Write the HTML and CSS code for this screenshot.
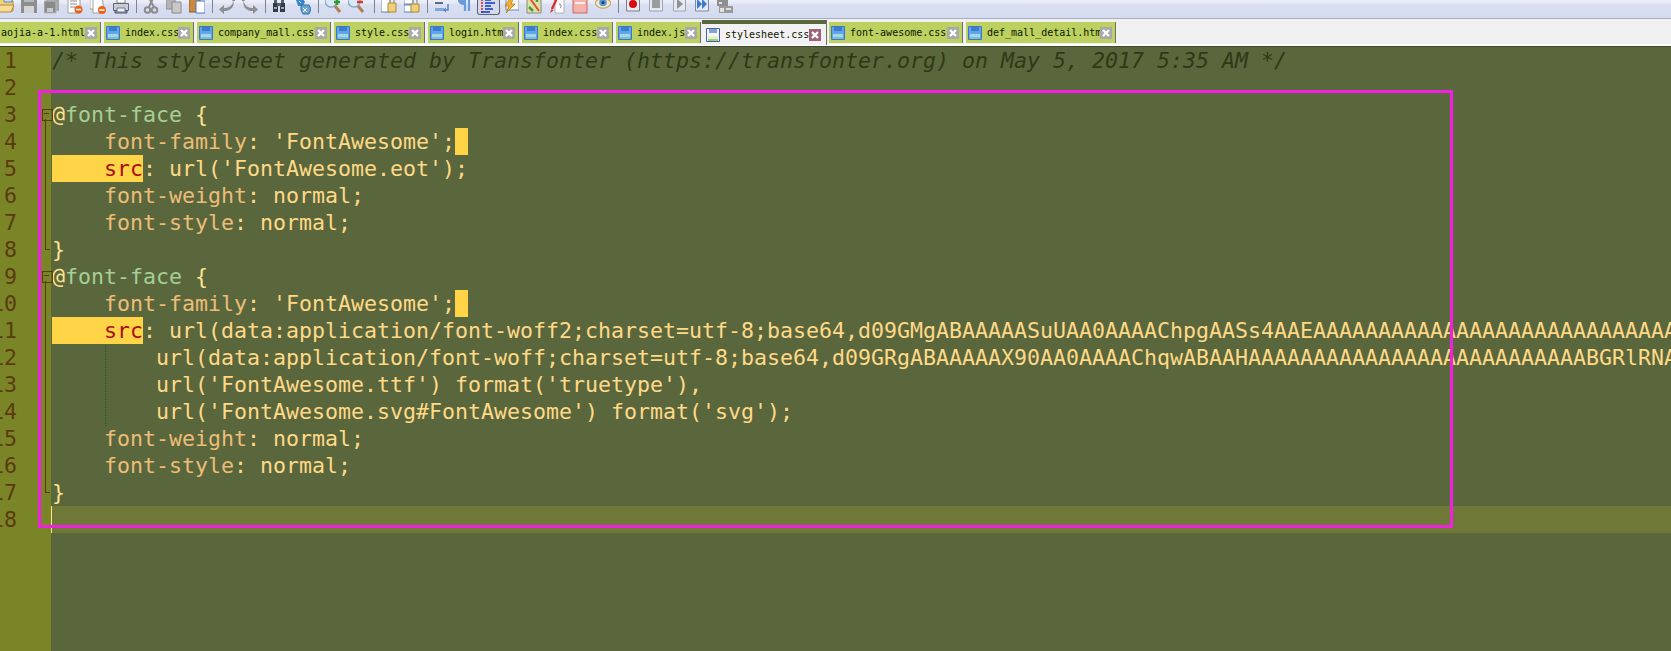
FILE: index.html
```html
<!DOCTYPE html>
<html lang="en">
<head>
<meta charset="utf-8">
<title>stylesheet.css</title>
<link rel="stylesheet" href="styles.css">
</head>
<body>
<svg class="defs" width="0" height="0" aria-hidden="true">
  <defs>
    <symbol id="i-open" viewBox="0 0 16 18"><path d="M-3 -3h12l2 4h4v10H-3z" fill="#f2cf7a" stroke="#b88a2c"/><path d="M-3 11l3-6h16l-3 7H-3z" fill="#f6dc98" stroke="#b88a2c"/><path d="M6 -4h8v6H6z" fill="#cfe0f5" stroke="#5b86c4"/></symbol>
    <symbol id="i-save" viewBox="0 0 16 18"><path d="M0 -4h16v17H0z" fill="#8e8e8e"/><path d="M3 6h10v7H3z" fill="#d4d4d4"/><path d="M3 -3h10v5H3z" fill="#b8b8b8"/></symbol>
    <symbol id="i-saveall" viewBox="0 0 16 18"><path d="M2 -2h13v13H2z" fill="#a4a4a4"/><path d="M0 1h12v12H0z" fill="#8a8a8a" stroke="#bbb"/><path d="M3 8h6v4H3z" fill="#c8c8c8"/></symbol>
    <symbol id="i-close" viewBox="0 0 16 18"><path d="M1 -4h10l2 2v15H1z" fill="#fff" stroke="#a0a0a0"/><path d="M3 1h7M3 4h7M3 7h5" stroke="#8a8a8a"/><circle cx="11.500" cy="9.500" r="4" fill="#e8641c"/><path d="M9 9.500h5" stroke="#fff" stroke-width="1.500"/></symbol>
    <symbol id="i-closeall" viewBox="0 0 16 18"><path d="M0 -4h8l2 2v11H0z" fill="#fff" stroke="#a0a0a0"/><path d="M3 -1h8l2 2v12H3z" fill="#fff" stroke="#a0a0a0"/><circle cx="12" cy="10" r="4" fill="#e8641c"/><path d="M9.500 10h5" stroke="#fff" stroke-width="1.500"/></symbol>
    <symbol id="i-print" viewBox="0 0 16 18"><path d="M4 -4h8v7H4z" fill="#fff" stroke="#888"/><path d="M.5 3.500h15v7H.5z" fill="#c6ccd8" stroke="#667"/><path d="M2 10.500h12v2.500H2z" fill="#8d94a6" stroke="#556"/><path d="M4 8h8v4H4z" fill="#eef" stroke="#778"/></symbol>
    <symbol id="i-cut" viewBox="0 0 16 18"><path d="M11 -4L6 7M5 -4l6 11" stroke="#8c8c8c" stroke-width="2" fill="none"/><circle cx="4.500" cy="10" r="2.800" fill="none" stroke="#8c8c8c" stroke-width="2"/><circle cx="11.500" cy="10" r="2.800" fill="none" stroke="#8c8c8c" stroke-width="2"/></symbol>
    <symbol id="i-copy" viewBox="0 0 16 18"><path d="M0 -3h9v12H0z" fill="#b4b4b4" stroke="#8a8a8a"/><path d="M6 2h9v11H6z" fill="#c8c8c8" stroke="#8a8a8a"/></symbol>
    <symbol id="i-paste" viewBox="0 0 16 18"><path d="M0 -3h11v15H0z" fill="#c88a40" stroke="#8a5a20"/><path d="M7 1h9v12H7z" fill="#fff" stroke="#4a78c0"/></symbol>
    <symbol id="i-undo" viewBox="0 0 16 18"><path d="M13 -3c3 6-1 11-8 11V5L0 9.500 5 14v-3c8 0 12-6 8-14z" fill="#8e8e8e"/><path d="M2 -2h9c3 0 4 2 4 3" stroke="#8e8e8e" stroke-width="3" fill="none"/></symbol>
    <symbol id="i-redo" viewBox="0 0 16 18"><path d="M3 -3c-3 6 1 11 8 11V5l5 4.500L11 14v-3C3 11-1 5 3-3z" fill="#8e8e8e"/><path d="M14 -2H5c-3 0-4 2-4 3" stroke="#8e8e8e" stroke-width="3" fill="none"/></symbol>
    <symbol id="i-find" viewBox="0 0 16 18"><path d="M1 3h5v9H1zM8 3h5v9H8z" fill="#333a48"/><path d="M2 -3h3v6H2zM9 -3h3v6H9zM5 3h4v3H5z" fill="#59606e"/><path d="M2 7h3v2H2zM9 7h3v2H9z" fill="#9aa"/></symbol>
    <symbol id="i-replace" viewBox="0 0 16 18"><path d="M0 -3h7l3 5-2 4H3z" fill="#3d86c9"/><path d="M6 5h8l2 4-2 5H8l-2-4z" fill="#6aa5d8" stroke="#2d6ea8"/><path d="M4 1l2 2M8 8l4 4M12 8l-4 4" stroke="#fff"/></symbol>
    <symbol id="i-zoomin" viewBox="0 0 16 18"><circle cx="6" cy="1" r="6" fill="#dbe8f6" stroke="#8aa6c8" stroke-width="1.500"/><path d="M10 6l5 6" stroke="#b08050" stroke-width="3"/><path d="M9 2h6M12-1v6" stroke="#2f9a38" stroke-width="2.500"/></symbol>
    <symbol id="i-zoomout" viewBox="0 0 16 18"><circle cx="6" cy="1" r="6" fill="#dbe8f6" stroke="#8aa6c8" stroke-width="1.500"/><path d="M10 6l5 6" stroke="#b08050" stroke-width="3"/><path d="M9 2h6" stroke="#d83838" stroke-width="2.500"/></symbol>
    <symbol id="i-syncv" viewBox="0 0 16 18"><path d="M0 -4h9v16H0z" fill="#fff" stroke="#5a7fb8"/><path d="M7 3h8v9H7z" fill="#ecd07c" stroke="#b08a2c"/><path d="M9 3V0a2 2 0 0 1 4 0v3" fill="none" stroke="#a0a0a0" stroke-width="1.500"/></symbol>
    <symbol id="i-synch" viewBox="0 0 16 18"><path d="M0 -4h9v8H0z" fill="#fff" stroke="#5a7fb8"/><path d="M0 5h9v7H0z" fill="#fff" stroke="#5a7fb8"/><path d="M7 4h8v8H7z" fill="#ecd07c" stroke="#b08a2c"/><path d="M9 4V1a2 2 0 0 1 4 0v3" fill="none" stroke="#a0a0a0" stroke-width="1.500"/></symbol>
    <symbol id="i-wrap" viewBox="0 0 16 18"><path d="M1 -1h14M1 3h8" stroke="#33415a" stroke-width="1.500"/><path d="M1 8h9v3H1z" fill="#7fa8dc"/><path d="M14 4v6h-3" stroke="#5a86c4" stroke-width="1.500" fill="none"/><path d="M12 7.500L9 10l3 2.500z" fill="#5a86c4"/></symbol>
    <symbol id="i-para" viewBox="0 0 16 18"><path d="M5 -4h9M6 -4a4 4 0 0 0 0 8h2v-8M8 -4v15M12 -4v15" stroke="#6a9ad8" stroke-width="2.200" fill="#6a9ad8"/></symbol>
    <symbol id="i-guide" viewBox="0 0 16 18"><path d="M2 -4v17" stroke="#d82020" stroke-width="1.500" stroke-dasharray="2 1"/><path d="M5 -3h9M5 0h6M5 3h10M5 6h6M5 9h8M1 12h9" stroke="#1038c8" stroke-width="1.700"/></symbol>
    <symbol id="i-lang" viewBox="0 0 16 18"><path d="M3 -2h13v12H3z" fill="#f6f8fc" stroke="#7a8aa8"/><path d="M8 -3L2 6h4l-3 7 9-9H8l3-7z" fill="#f0b030" stroke="#b07a10" stroke-width=".7"/></symbol>
    <symbol id="i-map" viewBox="0 0 16 18"><path d="M1 -4h14v17H1z" fill="#dbe2a8" stroke="#8a8a70"/><path d="M3 -3l10 14" stroke="#e05030" stroke-width="2"/><path d="M3 7l4 4M11 -3v5" stroke="#4a9a48" stroke-width="2.500"/></symbol>
    <symbol id="i-func" viewBox="0 0 16 18"><path d="M6 -3h9v16H6z" fill="#fff" stroke="#b0b0b0"/><path d="M10 4c2 0 2 1 2 2s-1 2 0 2" stroke="#777" fill="none"/><path d="M8 -2L3 9" stroke="#d83030" stroke-width="2.400"/><path d="M1 13l1.500-4 2 1.500z" fill="#d83030"/><path d="M9 -2l-8 1" stroke="#d83030" stroke-width="1.500"/></symbol>
    <symbol id="i-folder" viewBox="0 0 16 18"><path d="M1 -3h5l2 2h7v14H1z" fill="#f4b2ac" stroke="#c8685e"/><path d="M3 3h10" stroke="#fff" stroke-width="1.500"/></symbol>
    <symbol id="i-eye" viewBox="0 0 16 18"><path d="M0 3C3-3 13-3 16 3c-3 7-13 7-16 0z" fill="#f5ead0" stroke="#c8a060" stroke-width="1.200"/><circle cx="8" cy="2.500" r="3.800" fill="#5a9ad0"/><circle cx="8" cy="2.500" r="1.500" fill="#1f3e68"/></symbol>
    <symbol id="i-rec" viewBox="0 0 16 18"><path d="M1.500 -4h13v15h-13z" fill="#e4e8f4" stroke="#7c7f88"/><circle cx="8" cy="4" r="4" fill="#d80c10"/></symbol>
    <symbol id="i-stop" viewBox="0 0 16 18"><path d="M1.500 -4h13v15h-13z" fill="#e4e8f4" stroke="#a2a4ac"/><path d="M4 0h8v8H4z" fill="#9c9c9c"/></symbol>
    <symbol id="i-play" viewBox="0 0 16 18"><path d="M2.500 -4h12v15h-12z" fill="#e4e8f4" stroke="#a2a4ac"/><path d="M6 -1l6 5-6 5z" fill="#909090"/></symbol>
    <symbol id="i-fast" viewBox="0 0 16 18"><path d="M1.500 -4h13v15h-13z" fill="#e4e8f4" stroke="#7c88a8"/><path d="M3 -1l5 5-5 5zM8 -1l5 5-5 5z" fill="#3c78d0"/></symbol>
    <symbol id="i-macro" viewBox="0 0 16 18"><path d="M0 -4h11v10H0z" fill="#8e8e8e"/><path d="M2 6h14v7H2z" fill="#9a9a9a"/><path d="M3 8h4v4H3zM9 8h5v2H9z" fill="#e0e0e0"/><path d="M2 -2h3v2H2zM7 -2h3v2H7zM2 2h3v2H2z" fill="#e0e0e0"/></symbol>
    <symbol id="i-disk" viewBox="0 0 14 14"><path d="M.5 .5h13v13H.5z" fill="#5fa5ea" stroke="#3c78c4"/><path d="M3 1h8v4H3z" fill="#3c7cd0"/><path d="M2 8h10v5H2z" fill="#a8d4e8"/><path d="M2 11h10v2H2z" fill="#7cc0c8"/></symbol>
    <symbol id="i-disk-on" viewBox="0 0 14 14"><path d="M.5 .5h13v13H.5z" fill="#f4f6fc" stroke="#3c64b0"/><path d="M3 1h8v4H3z" fill="#8aa0cc"/><path d="M2 8h10v5H2z" fill="#e8ecd0"/><path d="M2 11h10v2H2z" fill="#a4cc6c"/></symbol>
    <symbol id="i-x" viewBox="0 0 12 12"><path d="M3 3l6 6M9 3l-6 6" stroke="#fff" stroke-width="2.400"/></symbol>
  </defs>
</svg>

<header class="toolbar">
  <svg class="tool"><use href="#i-open"/></svg>
  <svg class="tool"><use href="#i-save"/></svg>
  <svg class="tool"><use href="#i-saveall"/></svg>
  <svg class="tool"><use href="#i-close"/></svg>
  <svg class="tool"><use href="#i-closeall"/></svg>
  <svg class="tool"><use href="#i-print"/></svg>
  <i class="sep"></i>
  <svg class="tool"><use href="#i-cut"/></svg>
  <svg class="tool"><use href="#i-copy"/></svg>
  <svg class="tool"><use href="#i-paste"/></svg>
  <i class="sep"></i>
  <svg class="tool"><use href="#i-undo"/></svg>
  <svg class="tool"><use href="#i-redo"/></svg>
  <i class="sep"></i>
  <svg class="tool"><use href="#i-find"/></svg>
  <svg class="tool"><use href="#i-replace"/></svg>
  <i class="sep"></i>
  <svg class="tool"><use href="#i-zoomin"/></svg>
  <svg class="tool"><use href="#i-zoomout"/></svg>
  <i class="sep wide"></i>
  <svg class="tool"><use href="#i-syncv"/></svg>
  <svg class="tool"><use href="#i-synch"/></svg>
  <i class="sep"></i>
  <svg class="tool"><use href="#i-wrap"/></svg>
  <svg class="tool"><use href="#i-para"/></svg>
  <span class="tool-on"><svg class="tool"><use href="#i-guide"/></svg></span>
  <svg class="tool"><use href="#i-lang"/></svg>
  <svg class="tool"><use href="#i-map"/></svg>
  <svg class="tool"><use href="#i-func"/></svg>
  <svg class="tool"><use href="#i-folder"/></svg>
  <svg class="tool"><use href="#i-eye"/></svg>
  <i class="sep"></i>
  <svg class="tool"><use href="#i-rec"/></svg>
  <svg class="tool"><use href="#i-stop"/></svg>
  <svg class="tool"><use href="#i-play"/></svg>
  <svg class="tool"><use href="#i-fast"/></svg>
  <svg class="tool"><use href="#i-macro"/></svg>
</header>

<nav class="tabs">
  <div class="tab first"><span class="name">aojia-a-1.html</span><svg class="x"><use href="#i-x"/></svg></div>
  <div class="tab"><svg class="disk"><use href="#i-disk"/></svg><span class="name">index.css</span><svg class="x"><use href="#i-x"/></svg></div>
  <div class="tab"><svg class="disk"><use href="#i-disk"/></svg><span class="name">company_mall.css</span><svg class="x"><use href="#i-x"/></svg></div>
  <div class="tab"><svg class="disk"><use href="#i-disk"/></svg><span class="name">style.css</span><svg class="x"><use href="#i-x"/></svg></div>
  <div class="tab"><svg class="disk"><use href="#i-disk"/></svg><span class="name">login.htm</span><svg class="x"><use href="#i-x"/></svg></div>
  <div class="tab"><svg class="disk"><use href="#i-disk"/></svg><span class="name">index.css</span><svg class="x"><use href="#i-x"/></svg></div>
  <div class="tab"><svg class="disk"><use href="#i-disk"/></svg><span class="name">index.js</span><svg class="x"><use href="#i-x"/></svg></div>
  <div class="tab active"><svg class="disk"><use href="#i-disk-on"/></svg><span class="name">stylesheet.css</span><svg class="x"><use href="#i-x"/></svg></div>
  <div class="tab after-active"><svg class="disk"><use href="#i-disk"/></svg><span class="name">font-awesome.css</span><svg class="x"><use href="#i-x"/></svg></div>
  <div class="tab"><svg class="disk"><use href="#i-disk"/></svg><span class="name">def_mall_detail.htm</span><svg class="x"><use href="#i-x"/></svg></div>
</nav>

<main class="editor">
  <div class="gutter">
    <div>1</div><div>2</div><div>3</div><div>4</div><div>5</div><div>6</div><div>7</div><div>8</div><div>9</div>
    <div>10</div><div>11</div><div>12</div><div>13</div><div>14</div><div>15</div><div>16</div><div>17</div><div>18</div>
  </div>
  <div class="code">
    <div class="line comment">/* This stylesheet generated by Transfonter (https://transfonter.org) on May 5, 2017 5:35 AM */</div>
    <div class="line"></div>
    <div class="line"><span class="at">@</span><span class="rule">font-face</span> <span class="at">{</span></div>
    <div class="line">    <span class="prop">font-family</span>: 'FontAwesome';<span class="mark eol"></span></div>
    <div class="line"><span class="mark">    <span class="hit">src</span></span>: url('FontAwesome.eot');</div>
    <div class="line">    <span class="prop">font-weight</span>: normal;</div>
    <div class="line">    <span class="prop">font-style</span>: normal;</div>
    <div class="line"><span class="at">}</span></div>
    <div class="line"><span class="at">@</span><span class="rule">font-face</span> <span class="at">{</span></div>
    <div class="line">    <span class="prop">font-family</span>: 'FontAwesome';<span class="mark eol"></span></div>
    <div class="line"><span class="mark">    <span class="hit">src</span></span>: url(data:application/font-woff2;charset=utf-8;base64,d09GMgABAAAAASuUAA0AAAAChpgAASs4AAEAAAAAAAAAAAAAAAAAAAAAAAAAAAAAAAAAAAAAAAAAAAAAAAA</div>
    <div class="line">        url(data:application/font-woff;charset=utf-8;base64,d09GRgABAAAAAX90AA0AAAAChqwABAAHAAAAAAAAAAAAAAAAAAAAAAAAAABGRlRNAAAB</div>
    <div class="line">        url('FontAwesome.ttf') format('truetype'),</div>
    <div class="line">        url('FontAwesome.svg#FontAwesome') format('svg');</div>
    <div class="line">    <span class="prop">font-weight</span>: normal;</div>
    <div class="line">    <span class="prop">font-style</span>: normal;</div>
    <div class="line"><span class="at">}</span></div>
    <div class="line current"></div>
  </div>
  <i class="fold fold-a"></i>
  <i class="fold fold-b"></i>
  <i class="guide"></i>
  <div class="callout"></div>
</main>
</body>
</html>
```
FILE: styles.css
```css
* { box-sizing: border-box; }
html, body { margin: 0; padding: 0; }
body {
  width: 1671px;
  height: 651px;
  overflow: hidden;
  background: #5a673d;
  display: flex;
  flex-direction: column;
}
.defs { position: absolute; }

.toolbar {
  flex: none;
  height: 19px;
  display: flex;
  overflow: hidden;
  background: linear-gradient(#eceff9 0, #e6eaf7 3px, #d9dff1 5px, #d5dbef 17px);
  border-bottom: 1px solid #a9adc0;
}
.tool {
  flex: none;
  display: block;
  width: 16px;
  height: 18px;
  margin: 0 3.5px;
  overflow: hidden;
}
.toolbar > .tool:first-child { margin-left: -2px; margin-right: 3.5px; }
.sep {
  flex: none;
  width: 1px;
  height: 13px;
  margin: 0 3px;
  background: #7f8390;
}
.sep.wide { margin: 0 3px 0 6px; }
.tool-on {
  flex: none;
  display: block;
  width: 23px;
  height: 15px;
  padding-top: 2px;
  background: #d3dae9;
  border: 1px solid #5c6270;
  border-top: 0;
  border-radius: 0 0 3px 3px;
}
.tool-on .tool { margin: -2px 0 0 2.5px; }

.tabs {
  flex: none;
  height: 27px;
  padding-top: 3px;
  display: grid;
  grid-template-columns: 101px 90px 134px 91px 91px 91px 85px 123px 133px 150px;
  column-gap: 3px;
  justify-content: start;
  background: #f0f0f0;
  border-bottom: 2px solid #ffffff;
}
.tab {
  height: 21px;
  display: flex;
  align-items: center;
  padding: 0 3px 0 2px;
  background: #bcd15f;
  border-right: 1px solid #6e6e6e;
  font: 10px/21px "DejaVu Sans Mono", monospace;
  color: #0f1400;
  white-space: pre;
}
.tab.first { padding-left: 1px; }
.tab .disk { flex: none; width: 14px; height: 14px; display: block; margin-right: 5px; }
.tab .name { flex: 1 1 auto; min-width: 0; }
.tab .x {
  flex: none;
  width: 12px;
  height: 12px;
  display: block;
  background: #a9a9a9;
}
.tab.active {
  margin-top: -2px;
  margin-left: -2px;
  height: 25px;
  padding: 4px 5px 0 4px;
  background: #f2f2f2 linear-gradient(#5a673d, #5a673d) top / 100% 4px no-repeat;
}
.tab.active .x { background: #a1607a; }
.tab.after-active { margin-left: -1px; }

.editor {
  flex: 1 1 auto;
  position: relative;
  display: flex;
  border-top: 1px solid #3f4a2c;
  font: 21.6px/27px "DejaVu Sans Mono", monospace;
  overflow: hidden;
}
.gutter {
  flex: none;
  width: 51px;
  background: #7a8528;
  color: #5c3a10;
  padding-right: 34px;
  text-align: right;
  white-space: nowrap;
  direction: rtl;
}
.gutter > div { height: 27px; }
.code {
  flex: 1 1 auto;
  min-width: 0;
  color: #ffd986;
}
.line {
  height: 27px;
  padding-left: 1px;
  white-space: pre;
  overflow: hidden;
}
.comment { font-style: italic; color: #2e3a15; }
.at { color: #ffe38c; }
.rule { color: #a6cf95; }
.prop { color: #ecbd76; }
.mark {
  display: inline-block;
  height: 27px;
  background: #ffd447;
  vertical-align: top;
}
.mark.eol { width: 13px; }
.hit { color: #a80f0a; }
.current {
  background: #707838;
  box-shadow: inset 1px 0 0 #ffe38c;
}
.fold {
  position: absolute;
  left: 45px;
  width: 5px;
  border-left: 1px solid #5c3a10;
  border-bottom: 1px solid #5c3a10;
}
.fold::before {
  content: "";
  position: absolute;
  left: -4px;
  top: -10px;
  width: 9px;
  height: 10px;
  border: 1px solid #5c3a10;
}
.fold::after {
  content: "";
  position: absolute;
  left: -2px;
  top: -6px;
  width: 5px;
  height: 1px;
  background: #5c3a10;
}
.fold-a { top: 72px; height: 131px; }
.fold-b { top: 234px; height: 212px; }
.guide {
  position: absolute;
  left: 105px;
  top: 298px;
  height: 81px;
  border-left: 1px dotted #1e5a28;
}
.callout {
  position: absolute;
  left: 38px;
  top: 43px;
  width: 1415px;
  height: 438px;
  border: 3px solid #f020e0;
}
```
